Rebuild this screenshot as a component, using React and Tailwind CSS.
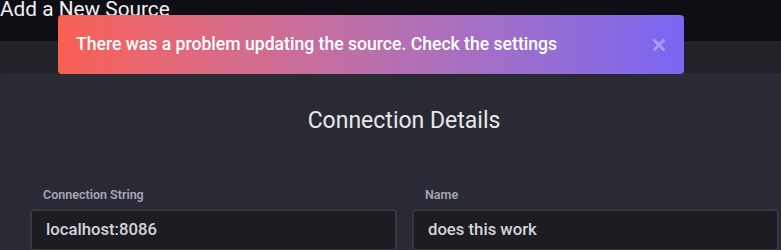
export default function App() {
  return (
    <div className="relative w-[781px] h-[250px] overflow-hidden bg-[#222328]" style={{ fontFamily: "Roboto, 'Noto Sans', sans-serif" }}>
      <div className="h-[41px] bg-[#0f0e15] overflow-hidden">
        <div className="text-[20.8px] leading-[20px] text-[#f0f0f3] -mt-[1px] whitespace-nowrap">Add a New Source</div>
      </div>
      <div className="mt-[32px] w-[808px] rounded-t-[4px] bg-[#292a33] h-[200px]">
        <div className="pt-[34px] text-center text-[23px] leading-[28px] text-[#e7e8eb]">Connection Details</div>
        <div className="mt-[53px] flex">
          <div className="ml-[30px] w-[367px]">
            <div className="pl-[13px] text-[12.5px] leading-[14px] font-semibold text-[#a4a8b6] whitespace-nowrap">Connection String</div>
            <div className="mt-[7px] h-[42px] rounded-[4px] border-2 border-[#373743] bg-[#1c1c21] pl-[14px] flex items-center text-[16.7px] font-medium text-[#d5d6dc] whitespace-nowrap">localhost:8086</div>
          </div>
          <div className="ml-[15px] w-[367px]">
            <div className="pl-[13px] text-[12.5px] leading-[14px] font-semibold text-[#a4a8b6]">Name</div>
            <div className="mt-[7px] h-[42px] rounded-[4px] border-2 border-[#373743] bg-[#1c1c21] pl-[14px] flex items-center text-[16.7px] font-medium text-[#d5d6dc] whitespace-nowrap">does this work</div>
          </div>
        </div>
      </div>
      <div className="absolute left-[58px] top-[15px] w-[626px] h-[59px] rounded-[4px] bg-gradient-to-r from-[#fa5f52] to-[#7a66f2] flex items-center justify-between pl-[18px] pr-[19px]">
        <span className="text-[17.6px] font-medium text-white whitespace-nowrap">There was a problem updating the source. Check the settings</span>
        <svg width="12" height="12" viewBox="0 0 12 12">
          <path d="M1.5 1.5 L10.5 10.5 M10.5 1.5 L1.5 10.5" stroke="rgba(255,255,255,0.35)" strokeWidth="2.6" strokeLinecap="round" />
        </svg>
      </div>
    </div>
  );
}
